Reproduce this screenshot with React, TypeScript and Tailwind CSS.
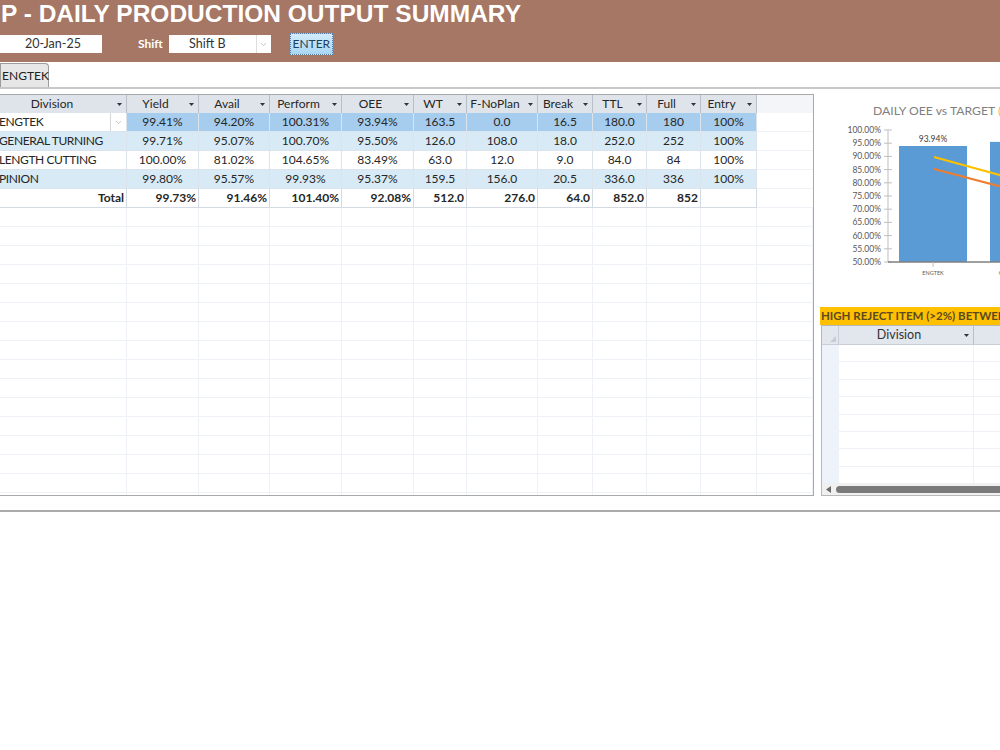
import { ChevronDown } from "lucide-react";

const COLS = "grid grid-cols-[135px_72px_71px_72px_72px_53px_71px_55px_54px_54px_56px_1fr]";

const heads = ["Division", "Yield", "Avail", "Perform", "OEE", "WT", "F-NoPlan", "Break", "TTL", "Full", "Entry"];

const rows = [
  ["ENGTEK", "99.41%", "94.20%", "100.31%", "93.94%", "163.5", "0.0", "16.5", "180.0", "180", "100%"],
  ["GENERAL TURNING", "99.71%", "95.07%", "100.70%", "95.50%", "126.0", "108.0", "18.0", "252.0", "252", "100%"],
  ["LENGTH CUTTING", "100.00%", "81.02%", "104.65%", "83.49%", "63.0", "12.0", "9.0", "84.0", "84", "100%"],
  ["PINION", "99.80%", "95.57%", "99.93%", "95.37%", "159.5", "156.0", "20.5", "336.0", "336", "100%"],
];

const total = ["Total", "99.73%", "91.46%", "101.40%", "92.08%", "512.0", "276.0", "64.0", "852.0", "852", ""];

const rowBg = ["bg-[#a6ccee]", "bg-[#d7eaf5]", "bg-white", "bg-[#d7eaf5]"];

function Arrow() {
  return (
    <svg width="5" height="3" viewBox="0 0 5 3" className="shrink-0">
      <path d="M0 0h5L2.5 3z" fill="#333" />
    </svg>
  );
}

function HeadCell({ label }: { label: string }) {
  return (
    <div className="flex h-[18px] items-center border-r border-[#b8bfc8] bg-[#dfe4eb]">
      <span className="flex-1 text-center">{label}</span>
      <span className="flex w-[14px] justify-center">
        <Arrow />
      </span>
    </div>
  );
}

function Chart() {
  const ticks = [100, 95, 90, 85, 80, 75, 70, 65, 60, 55, 50];
  const y = (v: number) => 168 - (v - 50) * 2.64;
  return (
    <svg width="240" height="213" className="block font-['Lato',sans-serif]">
      <text x="53" y="21" fontSize="12.2" fill="#7f7f7f">
        DAILY OEE vs TARGET <tspan fill="#f4b183">(</tspan>
      </text>
      {ticks.map((t) => (
        <g key={t}>
          <text x="61" y={y(t) + 3} fontSize="8.5" fill="#595959" textAnchor="end">
            {t.toFixed(2)}%
          </text>
          <line x1="64" x2="72" y1={y(t)} y2={y(t)} stroke="#bfbfbf" />
        </g>
      ))}
      <line x1="68" x2="68" y1={y(100)} y2={y(50)} stroke="#bfbfbf" />
      <rect x="79" y={y(93.94)} width="68" height={168 - y(93.94)} fill="#5b9bd5" />
      <rect x="170" y={y(95.5)} width="68" height={168 - y(95.5)} fill="#5b9bd5" />
      <line x1="68" x2="240" y1="168" y2="168" stroke="#7f7f7f" strokeWidth="1.5" />
      <line x1="113" x2="113" y1="168" y2="173" stroke="#bfbfbf" />
      <line x1="204" x2="204" y1="168" y2="173" stroke="#bfbfbf" />
      <text x="113" y={y(93.94) - 4} fontSize="8.5" fill="#404040" textAnchor="middle">
        93.94%
      </text>
      <line x1="114" y1="63" x2="205" y2="88" stroke="#ffc000" strokeWidth="2" />
      <line x1="114" y1="75" x2="205" y2="99" stroke="#ed7d31" strokeWidth="2" />
      <text x="113" y="181" fontSize="5.5" fill="#595959" textAnchor="middle">
        ENGTEK
      </text>
      <text x="204" y="181" fontSize="5.5" fill="#595959" textAnchor="middle">
        GENERAL TURNING
      </text>
    </svg>
  );
}

function RejectPanel() {
  return (
    <div className="flex h-[189px] flex-col">
      <div className="h-[18px] whitespace-nowrap bg-[#ffc000] pl-[1px] text-[11.5px] font-bold leading-[18px] text-[#5b4a20]">
        HIGH REJECT ITEM (&gt;2%) BETWEEN DATE
      </div>
      <div className="ml-[1px] flex flex-1 flex-col overflow-hidden border border-[#b8b8b8] bg-white">
        <div className="flex h-[19px] border-b border-[#c9ced6] bg-[#e2e6ed] text-[12.5px] text-[#333]">
          <div className="flex w-[17px] items-end justify-end border-r border-[#c9ced6] pb-[2px] pr-[2px]">
            <svg width="6" height="6" viewBox="0 0 6 6">
              <path d="M6 0v6H0z" fill="#c8ccd2" />
            </svg>
          </div>
          <div className="flex w-[135px] items-center border-r border-[#b8bfc8]">
            <span className="flex-1 text-center">Division</span>
            <span className="flex w-[14px] justify-center">
              <Arrow />
            </span>
          </div>
          <div className="flex-1" />
        </div>
        <div className="flex flex-1 overflow-hidden">
          <div className="w-[17px] bg-[#eef2fa]" />
          <div className="flex-1">
            {Array.from({ length: 8 }).map((_, i) => (
              <div key={i} className="flex h-[17.4px] border-b border-[#eef1f5]">
                <div className="w-[135px] border-r border-[#eef1f5]" />
              </div>
            ))}
          </div>
        </div>
        <div className="flex h-[12px] items-center bg-[#f0f0f0] pl-[4px]">
          <svg width="5" height="7" viewBox="0 0 5 7">
            <path d="M5 0v7L0 3.5z" fill="#6b6b6b" />
          </svg>
          <div className="ml-[5px] h-[7px] flex-1 rounded-full bg-[#7a7a7a]" />
        </div>
      </div>
    </div>
  );
}

export default function App() {
  return (
    <div className="h-[750px] w-[1000px] overflow-hidden bg-white font-['Lato','Open_Sans',sans-serif] text-[#262626]">
      <div className="h-[62px] bg-[#a67764]">
        <div className="whitespace-nowrap pl-[1px] font-['Liberation_Sans',Arial,sans-serif] text-[24.5px] font-bold leading-[28px] text-white">
          P - DAILY PRODUCTION OUTPUT SUMMARY
        </div>
        <div className="mt-[5px] flex items-center">
          <div className="flex h-[18px] w-[102px] items-center justify-center bg-white pl-[4px] text-[12.5px] text-[#333]">
            20-Jan-25
          </div>
          <span className="ml-[36px] text-[12px] font-bold text-white">Shift</span>
          <div className="ml-[6px] flex h-[18px] w-[102px] items-center bg-white text-[12.5px] text-[#333]">
            <span className="flex-1 pr-[10px] text-center">Shift B</span>
            <span className="flex h-full w-[15px] items-center justify-center border-l border-[#ddd]">
              <ChevronDown size={9} color="#9a9a9a" strokeWidth={1.5} />
            </span>
          </div>
          <button className="ml-[19px] h-[22px] w-[43px] border border-dotted border-[#4f7fae] bg-gradient-to-b from-[#d3ecfb] to-[#a8d6f3] text-[12px] text-[#1f3f5f]">
            ENTER
          </button>
        </div>
      </div>

      <div className="mt-[1px] flex h-[24px] w-[49px] items-center justify-center rounded-tr-[4px] border border-b-0 border-[#9c9c9c] bg-[#e7e7e7] pl-[2px] text-[12px] text-[#222]">
        ENGTEK
      </div>
      <div className="h-[2px] bg-[#c8c8c8]" />

      <div className="mt-[5px] flex items-start">
        <div className="-ml-[9px] h-[402px] w-[823px] shrink-0 overflow-hidden border border-[#a9a9a9] text-[12px]">
          <div className={`${COLS} h-[18px] border-b border-[#b8bfc8]`}>
            {heads.map((h) => (
              <HeadCell key={h} label={h} />
            ))}
            <div className="bg-[#f3f5f9]" />
          </div>
          {rows.map((r, i) => (
            <div key={r[0]} className={COLS}>
              {r.map((c, j) =>
                j === 0 ? (
                  <div
                    key={j}
                    className={`flex h-[19px] items-center border-b border-r border-[#dbe3ec] ${i === 0 ? "bg-white" : rowBg[i]}`}
                  >
                    <span className="flex-1 pl-[7px] tracking-[-0.4px]">{c}</span>
                    {i === 0 && (
                      <span className="flex h-full w-[16px] items-center justify-center border-l border-[#d6d6d6]">
                        <ChevronDown size={9} color="#9a9a9a" strokeWidth={1.5} />
                      </span>
                    )}
                  </div>
                ) : (
                  <div
                    key={j}
                    className={`flex h-[19px] items-center justify-center border-b border-r border-[#dbe3ec] ${rowBg[i]}`}
                  >
                    {c}
                  </div>
                )
              )}
              <div className="h-[19px] border-b border-[#eef1f5]" />
            </div>
          ))}
          <div className={COLS}>
            {total.map((c, j) => (
              <div
                key={j}
                className="flex h-[19px] items-center justify-end border-b border-r border-[#d3dae3] pr-[2px] font-bold"
              >
                {c}
              </div>
            ))}
            <div className="h-[19px] border-b border-[#eef1f5]" />
          </div>
          {Array.from({ length: 16 }).map((_, i) => (
            <div key={i} className={COLS}>
              {Array.from({ length: 12 }).map((__, j) => (
                <div key={j} className="h-[19px] border-b border-r border-[#eef1f5]" />
              ))}
            </div>
          ))}
        </div>

        <div className="ml-[6px] w-[240px] shrink-0">
          <Chart />
          <RejectPanel />
        </div>
      </div>

      <div className="mt-[14px] h-[2px] bg-[#ababab]" />
    </div>
  );
}
